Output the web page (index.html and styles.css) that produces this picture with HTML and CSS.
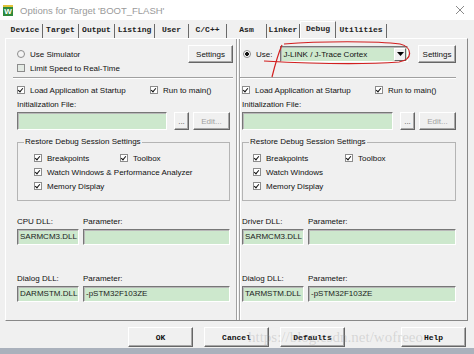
FILE: index.html
```html
<!DOCTYPE html>
<html lang="en">
<head>
  <meta charset="UTF-8">
  <title>Options for Target 'BOOT_FLASH'</title>
  <link rel="stylesheet" href="styles.css">
</head>
<body>
<div class="dialog">
  <div class="titlebar">
    <span class="app-icon">W</span>
    <span class="title">Options for Target 'BOOT_FLASH'</span>
    <svg class="close" width="10" height="10" viewBox="0 0 10 10"><path d="M1 1 L9 9 M9 1 L1 9" stroke="#8a8a8a" stroke-width="1"/></svg>
  </div>

  <div class="tabs">
    <span class="tab" style="width:35px">Device</span>
    <span class="tab" style="width:36px">Target</span>
    <span class="tab" style="width:36px">Output</span>
    <span class="tab" style="width:40px">Listing</span>
    <span class="tab" style="width:34px">User</span>
    <span class="tab" style="width:38px">C/C++</span>
    <span class="tab" style="width:40px">Asm</span>
    <span class="tab" style="width:33px">Linker</span>
    <span class="tab on" style="width:36px">Debug</span>
    <span class="tab" style="width:51px">Utilities</span>
  </div>

  <div class="page">
    <!-- simulator side -->
    <div class="col col-l">
      <div class="top">
        <div class="top-row">
          <span class="radio"></span><span>Use Simulator</span>
          <button class="btn set-l">Settings</button>
        </div>
        <div class="opt-row">
          <span class="cb off"></span><span>Limit Speed to Real-Time</span>
        </div>
      </div>
      <div class="frame frame-l">
        <div class="chk-row">
          <span class="item w133"><span class="cb on"></span>Load Application at Startup</span>
          <span class="item"><span class="cb on"></span>Run to main()</span>
        </div>
        <div class="lbl">Initialization File:</div>
        <div class="file-row">
          <div class="field file"></div>
          <button class="btn dots">...</button>
          <button class="btn edit">Edit...</button>
        </div>
        <fieldset class="group">
          <legend>Restore Debug Session Settings</legend>
          <div class="grp-row pl10"><span class="item w86"><span class="cb on"></span>Breakpoints</span><span class="item"><span class="cb on"></span>Toolbox</span></div>
          <div class="grp-row pl10"><span class="item"><span class="cb on"></span>Watch Windows &amp; Performance Analyzer</span></div>
          <div class="grp-row pl10"><span class="item"><span class="cb on"></span>Memory Display</span></div>
        </fieldset>
        <div class="dll-lbl"><span class="w66">CPU DLL:</span><span>Parameter:</span></div>
        <div class="dll-row"><div class="field dll">SARMCM3.DLL</div><div class="field param"></div></div>
        <div class="dll-lbl gap28"><span class="w66">Dialog DLL:</span><span>Parameter:</span></div>
        <div class="dll-row"><div class="field dll">DARMSTM.DLL</div><div class="field param">-pSTM32F103ZE</div></div>
      </div>
    </div>

    <!-- target driver side -->
    <div class="col col-r">
      <div class="top">
        <div class="top-row">
          <span class="radio sel"></span><span>Use:</span>
          <div class="combo">
            <span class="combo-text">J-LINK / J-Trace Cortex</span>
            <span class="combo-btn"><svg width="7" height="4" viewBox="0 0 7 4"><path d="M0 0 H7 L3.5 4 Z" fill="#000"/></svg></span>
          </div>
          <button class="btn set-r">Settings</button>
        </div>
      </div>
      <div class="frame frame-r">
        <div class="chk-row">
          <span class="item w133"><span class="cb on"></span>Load Application at Startup</span>
          <span class="item"><span class="cb on"></span>Run to main()</span>
        </div>
        <div class="lbl">Initialization File:</div>
        <div class="file-row">
          <div class="field file grow"></div>
          <button class="btn dots">...</button>
          <button class="btn edit">Edit...</button>
        </div>
        <fieldset class="group">
          <legend>Restore Debug Session Settings</legend>
          <div class="grp-row pl4"><span class="item w92"><span class="cb on"></span>Breakpoints</span><span class="item"><span class="cb on"></span>Toolbox</span></div>
          <div class="grp-row pl4"><span class="item"><span class="cb on"></span>Watch Windows</span></div>
          <div class="grp-row pl4"><span class="item"><span class="cb on"></span>Memory Display</span></div>
        </fieldset>
        <div class="dll-lbl"><span class="w66">Driver DLL:</span><span>Parameter:</span></div>
        <div class="dll-row"><div class="field dll">SARMCM3.DLL</div><div class="field param"></div></div>
        <div class="dll-lbl gap28"><span class="w66">Dialog DLL:</span><span>Parameter:</span></div>
        <div class="dll-row"><div class="field dll">TARMSTM.DLL</div><div class="field param">-pSTM32F103ZE</div></div>
      </div>
    </div>
  </div>

  <div class="footer">
    <button class="btn big">OK</button>
    <button class="btn big">Cancel</button>
    <button class="btn big">Defaults</button>
    <button class="btn big help">Help</button>
  </div>
  <div class="taskbar"></div>

  <div class="watermark">https://blog.csdn.net/wofreeo</div>
  <svg class="scribble" width="474" height="354" viewBox="0 0 474 354">
    <path d="M284 44 C320 41 378 41 400 44 C413 47 413 60 399 62 C360 65 300 63 264 61" fill="none" stroke="#d21f1f" stroke-width="1.2"/>
    <path d="M282 45 C278 54 275 65 272 77" fill="none" stroke="#d21f1f" stroke-width="1.2"/>
  </svg>
</div>
</body>
</html>
```

FILE: styles.css
```css
* { box-sizing: border-box; }
body { margin: 0; background: #f0f0f0; font-family: "Liberation Sans", Arial, sans-serif; font-size: 8px; color: #111; }
.dialog { position: relative; width: 474px; height: 354px; overflow: hidden; display: flex; flex-direction: column; }

.titlebar { height: 20px; flex: none; background: #fff; display: flex; align-items: center; padding-left: 3px; }
.app-icon { width: 10px; height: 11px; background: #2f8a3b; color: #fff; font-weight: bold; font-size: 8px; display: flex; align-items: center; justify-content: center; border-top: 2px solid #e2c33a; }
.title { margin-left: 7px; font-size: 9.5px; color: #9a9a9a; }
.close { margin-left: auto; margin-right: 9px; }

.tabs { height: 18px; flex: none; display: flex; align-items: flex-end; padding-left: 8px; font: bold 8px "Liberation Mono", monospace; color: #222; }
.tab { height: 14px; line-height: 12px; text-align: center; border-right: 1px solid #6a6a6a; }
.tab.on { height: 17px; line-height: 13px; border-left: 1px solid #fff; border-top: 1px solid #fff; border-right: 1px solid #6a6a6a; }

.page { flex: none; margin-left: 5px; width: 463px; height: 283px; border: 1px solid; border-color: #fff #888 #888 #fff; display: grid; grid-template-columns: 231px 228px; column-gap: 2px; }
.col { display: flex; flex-direction: column; }
.col-l { padding: 0 6px 0 11px; border-right: 1px solid #a0a0a0; box-shadow: 1px 0 0 #fff; }
.col-r { padding: 0 11px 0 2px; border-left: 1px solid #a0a0a0; box-shadow: inset 1px 0 0 #fff; }

.top { height: 38px; display: flex; flex-direction: column; }
.top-row { margin-top: 6px; height: 18px; display: flex; align-items: center; }
.opt-row { height: 10px; display: flex; align-items: center; }
.col-r .top-row { padding-left: 1px; }

.radio { width: 8px; height: 8px; border-radius: 50%; border: 1px solid #8c8c8c; background: #f4f4f4; margin-right: 5px; flex: none; }
.radio.sel { background: radial-gradient(circle, #111 0 1.6px, #fff 2.2px); }
.cb { display: inline-block; width: 8px; height: 8px; border: 1px solid #8c8c8c; background: #fff; margin-right: 5px; flex: none; vertical-align: middle; position: relative; }
.cb.off { background: #e4eae4; }
.cb.on::after { content: ""; position: absolute; left: 1px; top: 0; width: 2px; height: 4px; border: solid #111; border-width: 0 1.5px 1.5px 0; transform: rotate(40deg); }

.btn { height: 18px; padding: 0; border: 1px solid; border-color: #fff #666 #666 #fff; box-shadow: inset -1px -1px 0 #a8a8a8; background: #f0f0f0; font: 8px "Liberation Sans", Arial, sans-serif; color: #111; flex: none; }
.set-l { margin-left: auto; margin-right: -3px; width: 45px; }
.set-r { margin-left: auto; width: 38px; }

.combo { margin-left: 8px; width: 128px; height: 16px; display: flex; align-items: center; background: #cde8cd; border: 1px solid; border-color: #777 #fff #fff #777; box-shadow: inset 1px 1px 0 #b8b8b8; }
.combo-text { flex: 1; padding-left: 2px; }
.combo-btn { width: 12px; height: 13px; margin-right: 1px; display: flex; align-items: center; justify-content: center; background: #f0f0f0; border: 1px solid; border-color: #fff #666 #666 #fff; }

.frame { border-top: 1px solid #a0a0a0; box-shadow: inset 0 1px 0 #fff; }
.frame-l { margin: 0 -3px 0 -4px; padding: 0 3px 0 4px; }
.frame-r { margin: 0 0 0 -2px; padding: 0 0 0 2px; }

.chk-row { margin-top: 6px; height: 12px; display: flex; align-items: center; }
.item { display: inline-flex; align-items: center; white-space: nowrap; }
.w133 { width: 133px; }
.w86 { width: 86px; }
.w92 { width: 92px; }
.w66 { display: inline-block; width: 66px; }

.lbl { margin-top: 3px; height: 12px; line-height: 12px; }
.file-row { margin-top: 1px; height: 18px; display: flex; }
.field { height: 16px; line-height: 14px; padding: 0 2px; background: #cde8cd; border: 1px solid; border-color: #777 #fff #fff #777; box-shadow: inset 1px 1px 0 #b8b8b8; white-space: nowrap; overflow: hidden; color: #222; }
.file { height: 18px; width: 150px; }
.file.grow { flex: 1; width: auto; }
.dots { width: 15px; margin-left: 7px; color: #555; }
.edit { width: 37px; margin-left: 4px; color: #a0a0a0; }

.group { margin: 7px 0 0; padding: 4px 0 7px 6px; border: 1px solid #b4b4b4; min-width: 0; }
.group legend { padding: 0 1px; line-height: 10px; }
.grp-row { height: 14px; display: flex; align-items: center; }
.pl10 { padding-left: 10px; }
.pl4 { padding-left: 4px; }

.dll-lbl { margin-top: 15px; height: 12px; line-height: 12px; white-space: nowrap; }
.gap28 { margin-top: 28px; }
.dll-row { margin-top: 1px; display: flex; gap: 4px; }
.dll { width: 62px; }
.param { flex: 1; }

.footer { height: 27px; flex: none; display: flex; align-items: flex-start; padding: 6px 8px 0 128px; }
.big { width: 65px; height: 20px; font: bold 8px "Liberation Mono", monospace; margin-left: 11px; }
.big:first-child { margin-left: 0; }
.help { margin-left: auto; }
.taskbar { flex: 1; background: #aab1bc; }

.watermark { position: absolute; left: 248px; top: 329px; font: 15px "Liberation Serif", serif; color: rgba(150, 150, 150, 0.3); white-space: nowrap; pointer-events: none; }
.scribble { position: absolute; left: 0; top: 0; pointer-events: none; }
```
